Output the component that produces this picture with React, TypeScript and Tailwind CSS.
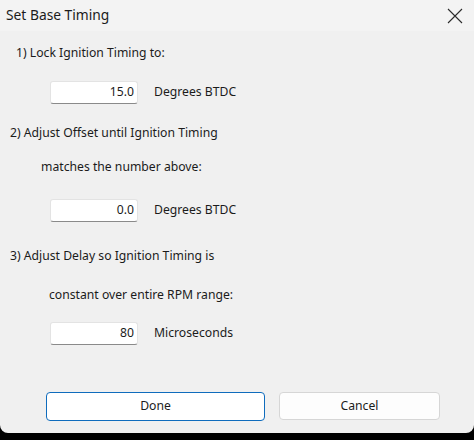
import React from 'react';

const font = { fontFamily: '"Noto Sans", "Open Sans", sans-serif' };

const NumberBox: React.FC<{ value: string; unit: string }> = ({ value, unit }) => (
    <div className="flex items-center pl-[50px]">
        <div className="w-[88px] h-[23px] bg-white border border-[#e3e3e3] border-b-[#8a8a8a] rounded-[3px] flex items-center justify-end pr-[3px] text-[12.2px] text-[#1b1b1b]">
            {value}
        </div>
        <span className="ml-[16px] text-[12.2px] text-[#1b1b1b]">{unit}</span>
    </div>
);

export default function App() {
    return (
        <div className="w-[474px] h-[440px] bg-black overflow-hidden" style={font}>
            <div className="h-[433px] bg-[#f0f0f0] rounded-b-lg flex flex-col">
                <header className="h-[31px] bg-[#f3f3f3] flex items-center justify-between pl-[6px] pr-[10px]">
                    <span className="text-[13.8px] text-[#1b1b1b]">Set Base Timing</span>
                    <svg width="16" height="16" viewBox="0 0 16 16" className="mr-[1px]">
                        <path d="M1 1L15 15M15 1L1 15" stroke="#2b2b2b" strokeWidth="1.1" fill="none" />
                    </svg>
                </header>

                <div className="flex flex-col text-[12.2px] text-[#1b1b1b]">
                    <div className="h-[24px] mt-[10px] flex items-center pl-[16px]">1) Lock Ignition Timing to:</div>
                    <div className="mt-[16px]">
                        <NumberBox value="15.0" unit="Degrees BTDC" />
                    </div>
                    <div className="h-[24px] mt-[17px] flex items-center pl-[10px]">2) Adjust Offset until Ignition Timing</div>
                    <div className="h-[24px] mt-[10px] flex items-center pl-[41px]">matches the number above:</div>
                    <div className="mt-[20px]">
                        <NumberBox value="0.0" unit="Degrees BTDC" />
                    </div>
                    <div className="h-[24px] mt-[22px] flex items-center pl-[10px]">3) Adjust Delay so Ignition Timing is</div>
                    <div className="h-[24px] mt-[15px] flex items-center pl-[49px]">constant over entire RPM range:</div>
                    <div className="mt-[15px]">
                        <NumberBox value="80" unit="Microseconds" />
                    </div>
                </div>

                <div className="flex items-start pl-[46px] mt-[47px] gap-[14px]">
                    <button className="w-[219px] h-[29px] bg-white border border-[#0f6cbd] rounded-[4px] text-[12.2px] text-[#1b1b1b]">
                        Done
                    </button>
                    <button className="w-[161px] h-[28px] bg-[#fdfdfd] border border-[#d6d6d6] rounded-[4px] text-[12.2px] text-[#1b1b1b]">
                        Cancel
                    </button>
                </div>
            </div>
        </div>
    );
}
